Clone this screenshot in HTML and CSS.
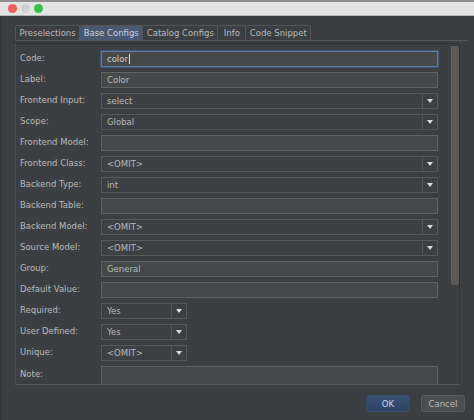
FILE: index.html
```html
<!DOCTYPE html>
<html lang="en">
<head>
    <meta charset="UTF-8">
    <meta name="viewport" content="width=device-width, initial-scale=1.0">
    <title>Attribute Configs</title>
    <link rel="stylesheet" href="styles.css">
</head>
<body>
    <div class="window">
        <div class="titlebar">
            <span class="light red"></span>
            <span class="light idle"></span>
            <span class="light green"></span>
        </div>

        <div class="dialog">
            <div class="tabs">
                <div class="tab">Preselections</div>
                <div class="tab active">Base Configs</div>
                <div class="tab">Catalog Configs</div>
                <div class="tab info">Info</div>
                <div class="tab">Code Snippet</div>
            </div>

            <div class="tab-panel">
                <div class="scroll-pane">
                    <div class="form">
                        <div class="row">
                            <label>Code:</label>
                            <div class="field focused">color<span class="caret"></span></div>
                        </div>
                        <div class="row">
                            <label>Label:</label>
                            <div class="field">Color</div>
                        </div>
                        <div class="row">
                            <label>Frontend Input:</label>
                            <div class="combo"><span class="value">select</span><span class="arrow"></span></div>
                        </div>
                        <div class="row">
                            <label>Scope:</label>
                            <div class="combo"><span class="value">Global</span><span class="arrow"></span></div>
                        </div>
                        <div class="row">
                            <label>Frontend Model:</label>
                            <div class="field"></div>
                        </div>
                        <div class="row">
                            <label>Frontend Class:</label>
                            <div class="combo"><span class="value">&lt;OMIT&gt;</span><span class="arrow"></span></div>
                        </div>
                        <div class="row">
                            <label>Backend Type:</label>
                            <div class="combo"><span class="value">int</span><span class="arrow"></span></div>
                        </div>
                        <div class="row">
                            <label>Backend Table:</label>
                            <div class="field"></div>
                        </div>
                        <div class="row">
                            <label>Backend Model:</label>
                            <div class="combo"><span class="value">&lt;OMIT&gt;</span><span class="arrow"></span></div>
                        </div>
                        <div class="row">
                            <label>Source Model:</label>
                            <div class="combo"><span class="value">&lt;OMIT&gt;</span><span class="arrow"></span></div>
                        </div>
                        <div class="row">
                            <label>Group:</label>
                            <div class="field">General</div>
                        </div>
                        <div class="row">
                            <label>Default Value:</label>
                            <div class="field"></div>
                        </div>
                        <div class="row">
                            <label>Required:</label>
                            <div class="combo small"><span class="value">Yes</span><span class="arrow"></span></div>
                        </div>
                        <div class="row">
                            <label>User Defined:</label>
                            <div class="combo small"><span class="value">Yes</span><span class="arrow"></span></div>
                        </div>
                        <div class="row">
                            <label>Unique:</label>
                            <div class="combo small"><span class="value">&lt;OMIT&gt;</span><span class="arrow"></span></div>
                        </div>
                        <div class="row tall">
                            <label>Note:</label>
                            <div class="field area"></div>
                        </div>
                    </div>
                    <div class="scrollbar"><div class="thumb"></div></div>
                </div>
            </div>

            <div class="buttons">
                <button class="btn primary">OK</button>
                <button class="btn">Cancel</button>
            </div>
        </div>
    </div>
</body>
</html>
```

FILE: styles.css
```css
body {
    margin: 0;
    padding: 0;
    background-color: #3c3f41;
    font-family: "DejaVu Sans", "Liberation Sans", sans-serif;
    font-size: 8.5px;
    color: #bbbbbb;
}

.window {
    width: 474px;
    height: 420px;
    overflow: hidden;
}

/* mac title bar */
.titlebar {
    height: 13px;
    border-top: 2px solid #8e8e8e;
    border-bottom: 1px solid #b4b4b4;
    background-color: #e4e4e4;
    display: flex;
    align-items: center;
    gap: 4px;
    padding-left: 8px;
}

.light {
    width: 9px;
    height: 9px;
    border-radius: 50%;
}

.red { background-color: #fc5f57; }
.idle { background-color: #cfcfcf; }
.green { background-color: #2fc541; }

.dialog {
    height: 404px;
    padding: 9px 7px 0 15px;
    box-sizing: border-box;
    box-shadow: inset 2px 0 0 #333537;
}

/* tabs */
.tabs {
    display: flex;
    height: 15px;
}

.tab {
    padding: 0 3.5px;
    border: 1px solid #545658;
    border-bottom: none;
    border-left: none;
    border-radius: 2px 2px 0 0;
    line-height: 14px;
    white-space: nowrap;
    text-align: center;
}

.tab:first-child {
    border-left: 1px solid #545658;
}

.tab.info {
    min-width: 20px;
}

.tab.active {
    background-color: #4a5972;
    color: #cdd3dc;
}

.tab-panel {
    border-top: 1px solid #56585a;
    padding-top: 2px;
}

.scroll-pane {
    display: flex;
    height: 342px;
    margin-right: 7px;
    box-sizing: border-box;
    border-top: 1px solid #2f3133;
    border-right: 1px solid #2f3133;
    border-left: 1px solid #505355;
    border-bottom: 1px solid #5a5d60;
}

.form {
    flex: 1;
    overflow: hidden;
    padding: 7px 13px 0 4px;
    display: flex;
    flex-direction: column;
    gap: 5px;
}

.row {
    display: grid;
    grid-template-columns: 81px 1fr;
    align-items: center;
    height: 16px;
    flex-shrink: 0;
}

.row label {
    margin-top: -2px;
    white-space: nowrap;
}

.row.tall {
    height: 40px;
    align-items: start;
}

.row.tall label {
    margin-top: 3px;
}

.field {
    height: 16px;
    box-sizing: border-box;
    border: 1px solid #626466;
    background-color: #45494a;
    padding-left: 5px;
    line-height: 14px;
    display: flex;
    align-items: center;
}

.field.focused {
    border-color: #5c7ea8;
    box-shadow: 0 0 0 1px #3f5878;
    color: #d0d0d0;
}

.field.area {
    height: 40px;
}

.caret {
    display: inline-block;
    width: 1px;
    height: 10px;
    background-color: #dddddd;
    margin-left: 1px;
}

.combo {
    height: 16px;
    box-sizing: border-box;
    border: 1px solid #57595b;
    background-color: #3d4042;
    display: flex;
}

.combo.small {
    width: 86px;
}

.combo .value {
    flex: 1;
    padding-left: 5px;
    line-height: 14px;
}

.combo .arrow {
    width: 14px;
    border-left: 1px solid #55585a;
    display: flex;
    align-items: center;
    justify-content: center;
}

.combo .arrow::after {
    content: "";
    border-left: 3px solid transparent;
    border-right: 3px solid transparent;
    border-top: 4px solid #dcdcdc;
}

/* scrollbar */
.scrollbar {
    width: 8px;
    padding-top: 2px;
}

.thumb {
    height: 239px;
    background-color: #5d5956;
    border-left: 1px solid #67635f;
    border-radius: 2px;
    box-sizing: border-box;
}

/* bottom buttons */
.buttons {
    display: flex;
    justify-content: flex-end;
    gap: 11px;
    padding-top: 10px;
    margin-right: 2px;
}

.btn {
    width: 44px;
    height: 17px;
    padding: 0;
    border: 1px solid #5b5e60;
    border-radius: 3px;
    background-color: #4b4f51;
    color: #bbbbbb;
    font-family: "DejaVu Sans", "Liberation Sans", sans-serif;
    font-size: 8.5px;
}

.btn.primary {
    border-color: #3a4f6c;
    background: linear-gradient(#385478, #2c4465);
    color: #cfd6e0;
}
```
